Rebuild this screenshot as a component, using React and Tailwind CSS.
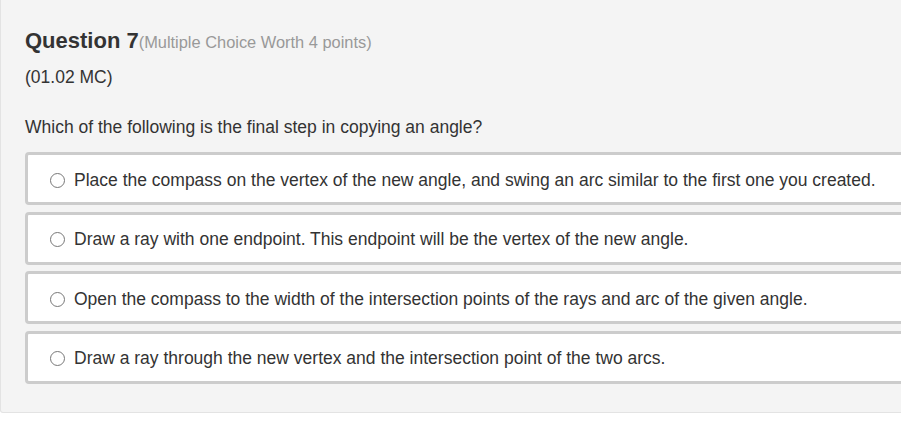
import React from 'react';

const options = [
    'Place the compass on the vertex of the new angle, and swing an arc similar to the first one you created.',
    'Draw a ray with one endpoint. This endpoint will be the vertex of the new angle.',
    'Open the compass to the width of the intersection points of the rays and arc of the given angle.',
    'Draw a ray through the new vertex and the intersection point of the two arcs.',
];

const App = () => {
    return (
        <div className="w-[901px] h-[421px] overflow-hidden bg-white font-['Liberation_Sans',Arial,sans-serif] text-[#333]">
            <div className="w-[930px] bg-[#f4f4f4] border border-t-0 border-[#e3e3e3] rounded-b-[3px] px-[24px] pt-[27px] pb-[28px]">
                {/* Header */}
                <div className="flex items-baseline h-[28px] leading-[28px]">
                    <span className="text-[22px] font-bold text-[#333]">Question 7</span>
                    <span className="text-[16.4px] text-[#999]">(Multiple Choice Worth 4 points)</span>
                </div>
                <p className="mt-[12px] text-[17.5px] leading-[21px]">(01.02 MC)</p>
                <p className="mt-[29px] text-[17.5px] leading-[21px]">Which of the following is the final step in copying an angle?</p>

                {/* Choices */}
                <div className="mt-[14px] flex flex-col gap-[6.67px]">
                    {options.map((opt) => (
                        <label key={opt} className="flex items-center gap-[9px] h-[53px] bg-white border-[3px] border-[#cccccc] rounded-[4px] pl-[22px] pt-[3px]">
                            <span className="w-[15px] h-[15px] rounded-full border border-[#777] bg-white flex-shrink-0" />
                            <span className="text-[17.5px] leading-[21px] text-[#333]">{opt}</span>
                        </label>
                    ))}
                </div>
            </div>
        </div>
    );
};

export default App;
